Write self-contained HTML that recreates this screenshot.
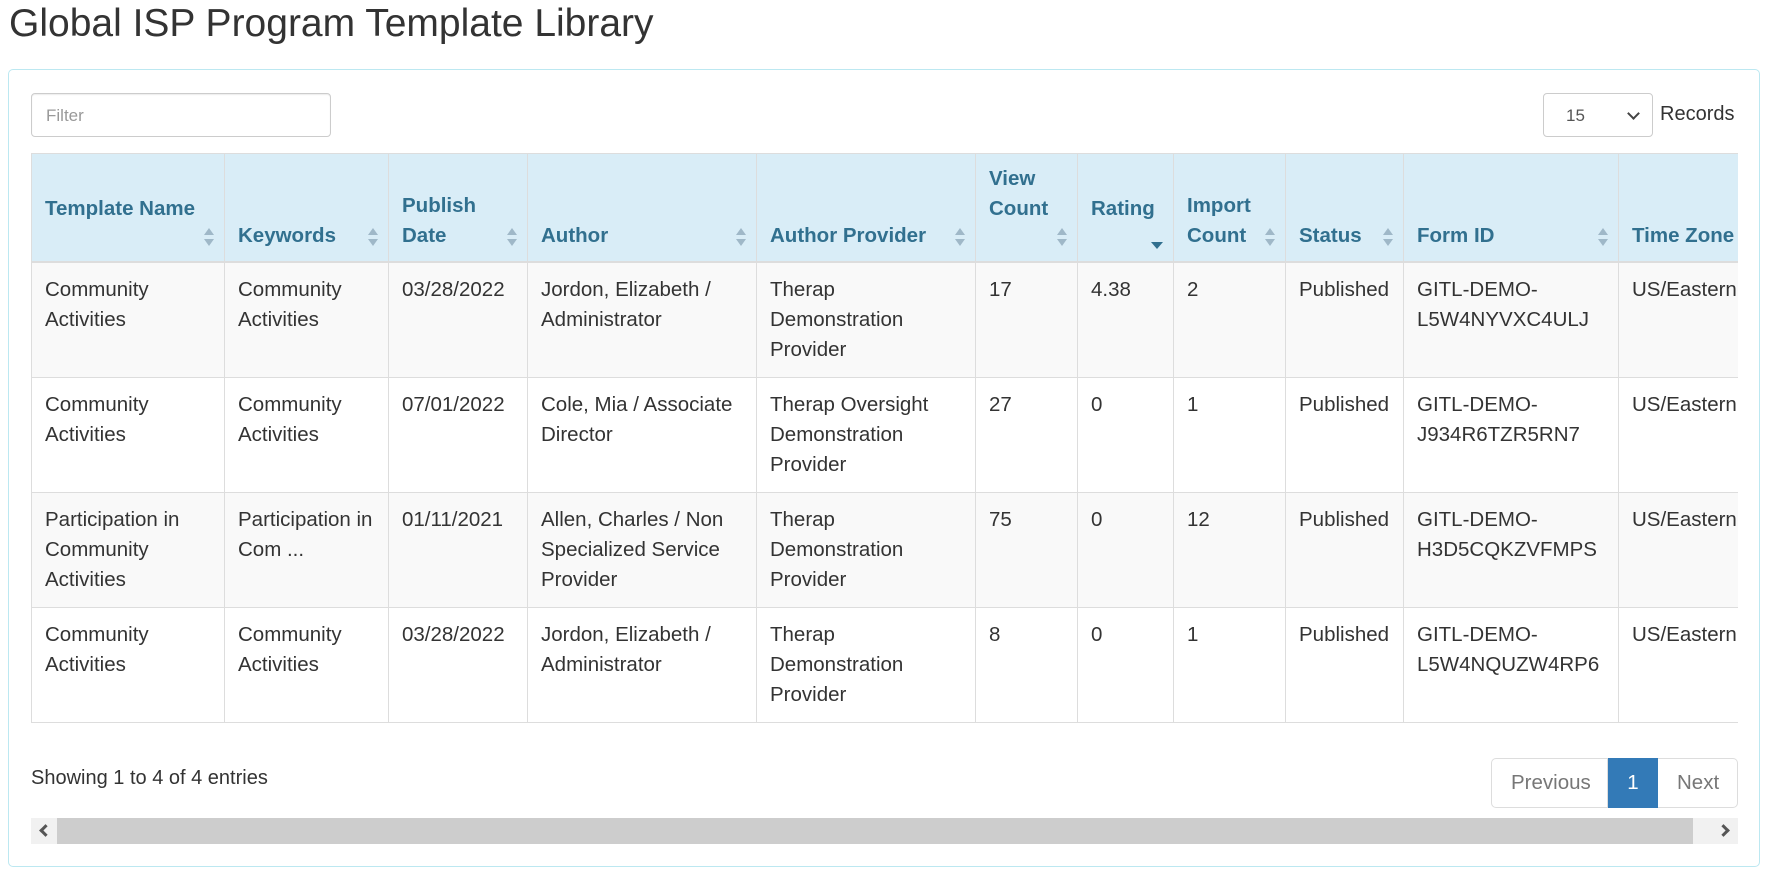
<!DOCTYPE html>
<html><head><meta charset="utf-8"><style>
*{box-sizing:border-box}
body{margin:0;background:#fff;font-family:"Liberation Sans",Arial,sans-serif;color:#333;width:1771px;height:873px;overflow:hidden;position:relative}
h1{position:absolute;left:9px;top:1px;margin:0;font-weight:400;font-size:39px;line-height:46px;color:#333}
.panel{position:absolute;left:8px;top:69px;width:1752px;height:798px;border:1px solid #bce8f1;border-radius:5px}
.filter{position:absolute;left:22px;top:23px;width:300px;height:44px;border:1px solid #ccc;border-radius:4px;font-size:17px;color:#999;padding:12px 14px;box-shadow:inset 0 1px 1px rgba(0,0,0,.075)}
.sel{position:absolute;left:1534px;top:23px;width:110px;height:44px;border:1px solid #ccc;border-radius:4px;font-size:17px;padding:12px 22px;color:#555}
.sel:after{content:"";position:absolute;right:14px;top:15px;width:7px;height:7px;border-right:2px solid #444;border-bottom:2px solid #444;transform:rotate(45deg)}
.rec{position:absolute;left:1651px;top:33px;font-size:20px}
.wrap{position:absolute;left:22px;top:83px;width:1707px;height:572px;overflow:hidden}
table{border-collapse:collapse;table-layout:fixed;width:1800px;font-size:20.5px;line-height:30px}
th,td{border:1px solid #ddd;padding:12px 13px;vertical-align:top;text-align:left}
th{background:#d9edf7;color:#31708f;font-weight:700;vertical-align:bottom;padding:10px 18px 10px 13px;position:relative;border-bottom:2px solid #ddd;white-space:nowrap}
th.up{padding-bottom:37px}
th .s{position:absolute;right:10px;bottom:15px;width:10px;height:18px}
th .s:before{content:"";position:absolute;left:0;top:0;border:5px solid transparent;border-bottom:7px solid #9fb8c8;border-top:0}
th .s:after{content:"";position:absolute;left:0;bottom:0;border:5px solid transparent;border-top:7px solid #9fb8c8;border-bottom:0}
th .d{position:absolute;right:10px;bottom:12px;border:6px solid transparent;border-top:7px solid #31708f;border-bottom:0}
tbody tr:nth-child(odd) td{background:#f9f9f9}
tr.h th{height:107px}
tbody tr td{height:115px;padding-bottom:0}
.show{position:absolute;left:22px;top:697px;font-size:20px}
.pg{position:absolute;left:1482px;top:688px;height:50px;display:flex;font-size:20.5px}
.pg div{border:1px solid #ddd;padding:12px 19px;color:#777;height:50px}
.pg .p{border-radius:5px 0 0 5px;width:117px;text-align:center}
.pg .a{background:#337ab7;border-color:#337ab7;color:#fff;width:50px;text-align:center;padding:12px 0}
.pg .n{border-radius:0 5px 5px 0;border-left:0;width:80px}
.sb{position:absolute;left:22px;top:748px;width:1707px;height:26px;background:#f1f1f1}
.sb .t{position:absolute;left:26px;top:0;width:1636px;height:26px;background:#cdcdcd}
.sb .l,.sb .r{position:absolute;top:8px;width:9px;height:9px;border-left:3px solid #555;border-bottom:3px solid #555}
.sb .l{left:10px;transform:rotate(45deg)}
.sb .r{right:10px;transform:rotate(-135deg)}
</style></head><body>
<h1>Global ISP Program Template Library</h1>
<div class="panel">
<div class="filter">Filter</div>
<div class="sel">15</div>
<div class="rec">Records</div>
<div class="wrap"><table>
<colgroup><col style="width:193px"><col style="width:164px"><col style="width:139px"><col style="width:229px"><col style="width:219px"><col style="width:102px"><col style="width:96px"><col style="width:112px"><col style="width:118px"><col style="width:215px"><col style="width:213px"></colgroup>
<thead><tr class="h">
<th class="up">Template Name<span class="s"></span></th><th>Keywords<span class="s"></span></th><th>Publish<br>Date<span class="s"></span></th><th>Author<span class="s"></span></th><th>Author Provider<span class="s"></span></th><th class="up">View<br>Count<span class="s"></span></th><th class="up">Rating<span class="d"></span></th><th>Import<br>Count<span class="s"></span></th><th>Status<span class="s"></span></th><th>Form ID<span class="s"></span></th><th>Time Zone<span class="s"></span></th>
</tr></thead>
<tbody>
<tr><td>Community Activities</td><td>Community Activities</td><td>03/28/2022</td><td>Jordon, Elizabeth / Administrator</td><td>Therap Demonstration Provider</td><td>17</td><td>4.38</td><td>2</td><td>Published</td><td>GITL-DEMO-L5W4NYVXC4ULJ</td><td>US/Eastern</td></tr>
<tr><td>Community Activities</td><td>Community Activities</td><td>07/01/2022</td><td>Cole, Mia / Associate Director</td><td>Therap Oversight Demonstration Provider</td><td>27</td><td>0</td><td>1</td><td>Published</td><td>GITL-DEMO-J934R6TZR5RN7</td><td>US/Eastern</td></tr>
<tr><td>Participation in Community Activities</td><td>Participation in Com ...</td><td>01/11/2021</td><td>Allen, Charles / Non Specialized Service Provider</td><td>Therap Demonstration Provider</td><td>75</td><td>0</td><td>12</td><td>Published</td><td>GITL-DEMO-H3D5CQKZVFMPS</td><td>US/Eastern</td></tr>
<tr><td>Community Activities</td><td>Community Activities</td><td>03/28/2022</td><td>Jordon, Elizabeth / Administrator</td><td>Therap Demonstration Provider</td><td>8</td><td>0</td><td>1</td><td>Published</td><td>GITL-DEMO-L5W4NQUZW4RP6</td><td>US/Eastern</td></tr>
</tbody></table></div>
<div class="show">Showing 1 to 4 of 4 entries</div>
<div class="pg"><div class="p">Previous</div><div class="a">1</div><div class="n">Next</div></div>
<div class="sb"><div class="t"></div><div class="l"></div><div class="r"></div></div>
</div>
</body></html>
